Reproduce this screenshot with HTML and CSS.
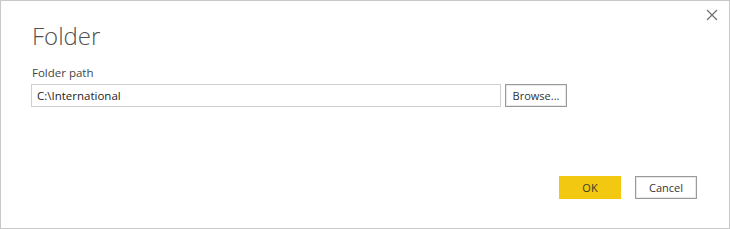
FILE: index.html
```html
<!DOCTYPE html>
<html>
<head>
<meta charset="utf-8">
<link rel="stylesheet" href="styles.css">
</head>
<body>
<div class="dialog">
  <button class="close" aria-label="Close">
    <svg width="12" height="12" viewBox="0 0 12 12"><path d="M1 1 L11 11 M11 1 L1 11" stroke="#6f6f6f" stroke-width="1.2" fill="none"/></svg>
  </button>
  <h1 class="title">Folder</h1>
  <div class="label">Folder path</div>
  <div class="row">
    <div class="input">C:\International</div>
    <button class="btn">Browse...</button>
  </div>
  <div class="footer">
    <button class="btn primary">OK</button>
    <button class="btn">Cancel</button>
  </div>
</div>
</body>
</html>
```

FILE: styles.css
```css
html, body {
  margin: 0;
  padding: 0;
  background: #ffffff;
}
.dialog {
  position: relative;
  box-sizing: border-box;
  width: 730px;
  height: 229px;
  border: 1px solid #c8c8c8;
  padding: 19px 0 0 30px;
  font-family: "Open Sans", "Noto Sans", sans-serif;
  color: #333333;
}
.close {
  position: absolute;
  top: 7px;
  right: 10px;
  width: 14px;
  height: 14px;
  padding: 1px;
  border: 0;
  background: transparent;
  display: flex;
}
.title {
  margin: 0;
  font-size: 24px;
  font-weight: 300;
  line-height: 32px;
  color: #505050;
  padding-left: 1px;
}
.label {
  margin-top: 13px;
  font-size: 11.5px;
  line-height: 16px;
  color: #444444;
  padding-left: 1px;
}
.row {
  display: flex;
  gap: 4px;
  margin-top: 3px;
}
.input {
  box-sizing: border-box;
  width: 470px;
  height: 23px;
  border: 1px solid #cfcfcf;
  padding: 0 5px;
  font-size: 11.5px;
  line-height: 21px;
  color: #1e1e1e;
}
.btn {
  box-sizing: border-box;
  width: 62px;
  height: 23px;
  border: 1px solid #9a9a9a;
  box-shadow: inset 0 0 0 1px #e8e8e8;
  background: #ffffff;
  font-family: "Open Sans", "Noto Sans", sans-serif;
  font-size: 11px;
  color: #333333;
  padding: 0;
  margin: 0;
}
.footer {
  display: flex;
  justify-content: flex-end;
  gap: 14px;
  margin-top: 69px;
  padding-right: 32px;
}
.primary {
  background: #f2c811;
  border: 1px solid #f2c811;
  box-shadow: none;
  color: #3a3a2a;
}
```
